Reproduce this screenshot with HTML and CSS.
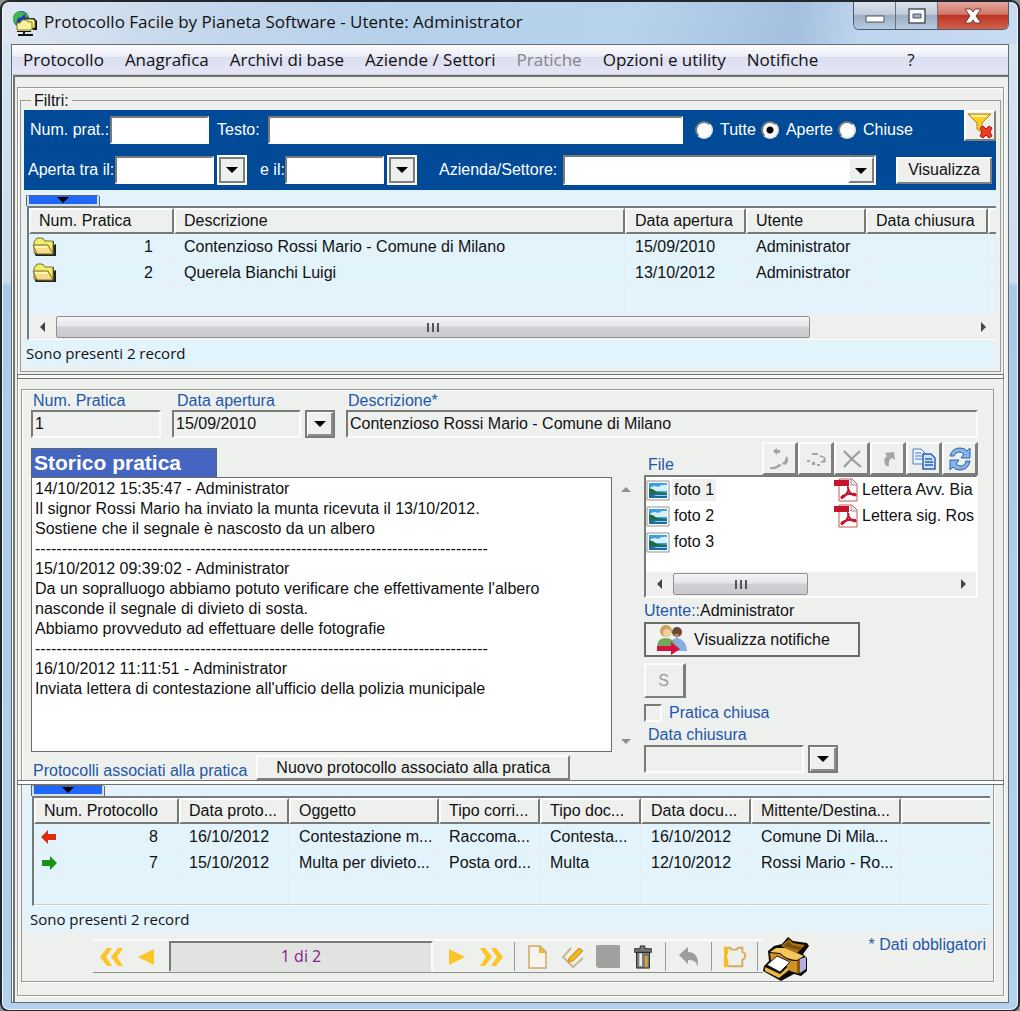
FILE: index.html
```html
<!DOCTYPE html>
<html lang="it">
<head>
<meta charset="utf-8">
<title>Protocollo Facile by Pianeta Software</title>
<link rel="stylesheet" href="styles.css">
</head>
<body>
<svg class="defs" aria-hidden="true">
  <symbol id="folder" viewBox="0 0 24 20">
    <path d="M3 18V4l3-3h5l2 3h9v4l2-1v12H4z" fill="#222"/>
    <path d="M2 16V5l3-4h5l3 3h8v13z" fill="#f3ee6a" stroke="#77702a"/>
    <path d="M1 8h15l5 9H5z" fill="#fbd98a" stroke="#77702a"/>
    <path d="M3 9h12l1 2H4z" fill="#fffbb5"/>
  </symbol>
  <symbol id="photo" viewBox="0 0 24 21">
    <path d="M1 1h22v19H1z" fill="#fff" stroke="#8d9498"/>
    <path d="M3 3h18v15H3z" fill="#3d9fe0"/>
    <path d="M3 9q4-5 9-2 4-3 9-2v6H3z" fill="#d4f0fa"/>
    <path d="M3 8q5 1 8 4l10 1v2H3z" fill="#1f6b4c"/>
    <path d="M3 14h18v4H3z" fill="#1d6c9c"/>
    <path d="M8 15h13v1H10z" fill="#8fd3e8"/>
  </symbol>
  <symbol id="pdf" viewBox="0 0 24 24">
    <path d="M5 1h13l5 5v17H5z" fill="#fff" stroke="#c55a5a"/>
    <path d="M17 1v6h6" fill="#e8e8e8" stroke="#999"/>
    <path d="M0 2h15v6H0z" fill="#c3142b"/>
    <path d="M13 9q2 0 1 4-2 5-6 7-2-1 3-3 5-2 10-1 2 2-2 1-5-3-5-8" fill="none" stroke="#c3142b" stroke-width="2"/>
  </symbol>
</svg>
<div class="window">
  <header class="titlebar">
    <svg class="app-icon" viewBox="0 0 26 26"><circle cx="9" cy="9" r="8" fill="#2436b8"/><path d="M1 8q1-5 6-7l6 2-3 4-4 1-2 6q-3-2-3-6zM12 2l5 4-3 2z" fill="#3fb84a"/><path d="M14 8h8l3 3v9h-4z" fill="#111"/><path d="M14 9h7l2 2v7h-6z" fill="#f5ee8c" stroke="#6a6220"/><path d="M5 13h3l2-3h5l1 2h4v8H5z" fill="#f8f29a" stroke="#8a8020"/><path d="M5 21h14v1h-6v2h8v2H6v-2h5v-2H5z" fill="#111"/></svg>
    <h1>Protocollo Facile by Pianeta Software - Utente: Administrator</h1>
    <div class="window-buttons">
      <button type="button" class="wb" aria-label="Riduci a icona"><svg viewBox="0 0 20 16"><path d="M1 8h18v6H1z" fill="#fff" stroke="#4b5560"/></svg></button>
      <button type="button" class="wb" aria-label="Ingrandisci"><svg viewBox="0 0 20 16"><path d="M2 1h16v14H2z" fill="#fff" stroke="#4b5560" stroke-width="1.5"/><path d="M6 6h8v4H6z" fill="#9fb0c2" stroke="#4b5560"/></svg></button>
      <button type="button" class="wb wb-close" aria-label="Chiudi"><svg viewBox="0 0 20 16"><path d="M2 1h6l2 3 2-3h6l-5 7 5 7h-6l-2-3-2 3H2l5-7z" fill="#fff" stroke="#6a3a3a"/></svg></button>
    </div>
  </header>

  <div class="client">
    <nav class="menu">
      <a href="#">Protocollo</a><a href="#">Anagrafica</a><a href="#">Archivi di base</a><a href="#">Aziende / Settori</a><a href="#" class="off">Pratiche</a><a href="#">Opzioni e utility</a><a href="#">Notifiche</a><a href="#" class="help">?</a>
    </nav>
    <div class="workspace">
      <main class="frame">
        <fieldset class="group">
          <legend>Filtri:</legend>
          <form class="filters">
            <div class="filter-row">
              <label for="num" class="l-num">Num. prat.:</label>
              <input id="num" class="sunken w-short" type="text">
              <label for="txt" class="l-txt">Testo:</label>
              <input id="txt" class="sunken grow" type="text">
              <div class="radios">
                <label><input type="radio" name="st">Tutte</label>
                <label><input type="radio" name="st" checked>Aperte</label>
                <label><input type="radio" name="st">Chiuse</label>
              </div>
              <button type="button" class="raised clear" aria-label="Rimuovi filtro"><svg viewBox="0 0 26 26"><path d="M1 1h23l-9 9v10l-5-4v-6z" fill="#f8d21c" stroke="#b8791a"/><path d="M3 2h18l-2 2H5z" fill="#fff3a0"/><path d="M13 15l3-2 3 3 3-3 3 2-2 4 2 4-3 2-3-3-3 3-3-2 2-4z" fill="#ee3b28" stroke="#a81410"/></svg></button>
            </div>
            <div class="filter-row row-dates">
              <label for="d1" class="l-from">Aperta tra il:</label>
              <input id="d1" class="sunken w-short" type="text">
              <button type="button" class="drop" aria-label="Calendario"></button>
              <label for="d2" class="l-to">e il:</label>
              <input id="d2" class="sunken w-short" type="text">
              <button type="button" class="drop" aria-label="Calendario"></button>
              <label for="az" class="l-az">Azienda/Settore:</label>
              <span class="combo grow"><select id="az" class="sunken"><option></option></select></span>
              <button type="button" class="raised show">Visualizza</button>
            </div>
          </form>
          <section class="list list-top">
            <button type="button" class="tab" aria-label="Comprimi"></button>
            <div class="grid">
              <table>
                <colgroup><col class="c145"><col><col class="c121"><col class="c120"><col class="c122"><col class="c8"></colgroup>
                <thead><tr><th>Num. Pratica</th><th>Descrizione</th><th>Data apertura</th><th>Utente</th><th>Data chiusura</th><th></th></tr></thead>
                <tbody>
                  <tr><td class="n"><div><svg class="folder"><use href="#folder"/></svg>1</div></td><td>Contenzioso Rossi Mario - Comune di Milano</td><td>15/09/2010</td><td>Administrator</td><td></td><td></td></tr>
                  <tr><td class="n"><div><svg class="folder"><use href="#folder"/></svg>2</div></td><td>Querela Bianchi Luigi</td><td>13/10/2012</td><td>Administrator</td><td></td><td></td></tr>
                  <tr class="blank"><td></td><td></td><td></td><td></td><td></td><td></td></tr>
                </tbody>
              </table>
              <div class="hscroll"><i class="arrow left"></i><span class="thumb thumb-wide"></span><i class="arrow right"></i></div>
            </div>
            <p class="status">Sono presenti 2 record</p>
          </section>
        </fieldset>

        <div class="splitter"></div>

        <section class="detail">
          <div class="fields">
            <div class="field f-num"><label for="np">Num. Pratica</label><input id="np" class="sunken flat" type="text" value="1" readonly></div>
            <div class="field f-date"><label for="da">Data apertura</label><div class="line"><input id="da" class="sunken flat" type="text" value="15/09/2010" readonly><button type="button" class="drop" aria-label="Calendario"></button></div></div>
            <div class="field grow"><label for="de">Descrizione*</label><input id="de" class="sunken flat" type="text" value="Contenzioso Rossi Mario - Comune di Milano" readonly></div>
          </div>
          <div class="columns">
            <div class="history">
              <label for="st" class="history-title">Storico pratica</label>
              <div class="history-body">
                <textarea id="st" readonly>14/10/2012 15:35:47 - Administrator
Il signor Rossi Mario ha inviato la munta ricevuta il 13/10/2012.
Sostiene che il segnale è nascosto da un albero
-------------------------------------------------------------------------------------
15/10/2012 09:39:02 - Administrator
Da un sopralluogo abbiamo potuto verificare che effettivamente l'albero
nasconde il segnale di divieto di sosta.
Abbiamo provveduto ad effettuare delle fotografie
-------------------------------------------------------------------------------------
16/10/2012 11:11:51 - Administrator
Inviata lettera di contestazione all'ufficio della polizia municipale</textarea>
                <div class="vscroll"><i class="arrow up"></i><i class="arrow down"></i></div>
              </div>
              <div class="assoc"><span class="blue">Protocolli associati alla pratica</span><button type="button" class="raised">Nuovo protocollo associato alla pratica</button></div>
            </div>
            <div class="side">
              <div class="file-head">
                <span class="blue">File</span>
                <div class="tools">
                  <button type="button" class="raised" aria-label="Inserisci"><svg viewBox="0 0 26 26"><path d="M6 5l4-3v2h3v3h-3v2zM19 10l2 2q1 6-4 7l-2-2q4-2 4-7zM3 21q5 1 9-3l3 1q-5 5-12 4z" fill="#a2a4a2"/></svg></button>
                  <button type="button" class="raised" aria-label="Scollega"><svg viewBox="0 0 26 26"><path d="M9 7h6v2H9zM4 14h3v2H4zM9 16h3v3H9zM17 9l5 2 1 5-5 1v-2h2l1-3-4-1zM14 18h3v2h-3z" fill="#a2a4a2"/></svg></button>
                  <button type="button" class="raised" aria-label="Elimina"><svg viewBox="0 0 26 26"><path d="M5 5q8 9 17 16M21 5Q13 12 5 21" fill="none" stroke="#999b99" stroke-width="2"/></svg></button>
                  <button type="button" class="raised" aria-label="Apri"><svg viewBox="0 0 26 26"><path d="M11 20q-4-7 1-10l-2-3 9-1 1 8-3-2q-4 1-3 8z" fill="#a2a4a2"/></svg></button>
                  <button type="button" class="raised" aria-label="Copia"><svg viewBox="0 0 26 26"><path d="M2 3h8l4 4v11H2z" fill="#eaf3ff" stroke="#4b7ac6"/><path d="M4 7h6M4 10h7M4 13h7" stroke="#4b7ac6"/><path d="M12 8h8l4 4v11H12z" fill="#cfe2fa" stroke="#2d5fb4" stroke-width="1.5"/><path d="M14 13h7M14 16h8M14 19h8" stroke="#2d5fb4" stroke-width="1.5"/></svg></button>
                  <button type="button" class="raised" aria-label="Aggiorna"><svg viewBox="0 0 26 26"><path d="M3 10q2-8 10-8 5 0 7 3l3-3v10h-9l3-4q-2-2-5-2-4 0-5 4z" fill="#84b4ea" stroke="#2a62b0"/><path d="M23 15q-2 9-10 9-5 0-7-3l-3 3V14h9l-3 4q2 2 5 2 4 0 5-5z" fill="#84b4ea" stroke="#2a62b0"/></svg></button>
                </div>
              </div>
              <div class="files">
                <ul>
                  <li class="sel"><svg class="ph"><use href="#photo"/></svg><span>foto 1</span></li>
                  <li><svg class="ph"><use href="#photo"/></svg><span>foto 2</span></li>
                  <li><svg class="ph"><use href="#photo"/></svg><span>foto 3</span></li>
                  <li><svg class="pd"><use href="#pdf"/></svg><span>Lettera Avv. Bia</span></li>
                  <li><svg class="pd"><use href="#pdf"/></svg><span>Lettera sig. Ros</span></li>
                </ul>
                <div class="hscroll"><i class="arrow left"></i><span class="thumb thumb-half"></span><i class="arrow right"></i></div>
              </div>
              <p class="user"><span class="blue">Utente::</span>Administrator</p>
              <button type="button" class="notify"><svg viewBox="0 0 32 30"><circle cx="21" cy="7" r="5" fill="#6b4a35"/><path d="M14 24q-1-10 7-11 9 1 10 13H14z" fill="#86aede"/><path d="M18 9h5l-2 5z" fill="#b98a68"/><circle cx="10" cy="6" r="6" fill="#c9a25c"/><circle cx="11" cy="8" r="4" fill="#f1cf9f"/><path d="M1 22q0-9 9-9t9 10H1z" fill="#71a85c"/><path d="M1 21h14v-4l9 7-9 6v-4H1z" fill="#d4143a"/></svg>Visualizza notifiche</button>
              <button type="button" class="raised s-btn" disabled>S</button>
              <label class="check blue"><input type="checkbox">Pratica chiusa</label>
              <label for="dc" class="blue closing">Data chiusura</label>
              <div class="line"><input id="dc" class="sunken flat" type="text" readonly><button type="button" class="drop" aria-label="Calendario"></button></div>
            </div>
          </div>
        </section>

        <div class="splitter splitter-low"></div>

        <section class="protocols">
          <div class="list list-bottom">
            <button type="button" class="tab" aria-label="Comprimi"></button>
            <div class="grid">
              <table>
                <colgroup><col class="c145"><col class="c110"><col class="c150"><col class="c101"><col class="c101"><col class="c110"><col class="c150"><col></colgroup>
                <thead><tr><th>Num. Protocollo</th><th>Data proto...</th><th>Oggetto</th><th>Tipo corri...</th><th>Tipo doc...</th><th>Data docu...</th><th>Mittente/Destina...</th><th></th></tr></thead>
                <tbody>
                  <tr><td class="n"><div><svg class="dir" viewBox="0 0 16 14"><path d="M0 7l7-7v4h8v6H7v4z" fill="#dc2c10"/></svg>8</div></td><td>16/10/2012</td><td>Contestazione m...</td><td>Raccoma...</td><td>Contesta...</td><td>16/10/2012</td><td>Comune Di Mila...</td><td></td></tr>
                  <tr><td class="n"><div><svg class="dir" viewBox="0 0 16 14"><path d="M16 7L9 0v4H1v6h8v4z" fill="#1a9312"/></svg>7</div></td><td>15/10/2012</td><td>Multa per divieto...</td><td>Posta ord...</td><td>Multa</td><td>12/10/2012</td><td>Rossi Mario - Ro...</td><td></td></tr>
                  <tr class="blank"><td></td><td></td><td></td><td></td><td></td><td></td><td></td><td></td></tr>
                </tbody>
              </table>
            </div>
            <p class="status">Sono presenti 2 record</p>
          </div>
          <footer class="footer">
            <div class="navigator">
              <button type="button" aria-label="Primo"><svg viewBox="0 0 24 24"><path d="M8 3h5l-6 9 6 9H8L1 12zM19 3h5l-6 9 6 9h-5l-7-9z" fill="#fcc425"/></svg></button>
              <button type="button" aria-label="Precedente"><svg viewBox="0 0 24 24"><path d="M4 12L20 4v16z" fill="#fcc425"/></svg></button>
              <output>1 di 2</output>
              <button type="button" aria-label="Successivo"><svg viewBox="0 0 24 24"><path d="M20 12L4 4v16z" fill="#fcc425"/></svg></button>
              <button type="button" aria-label="Ultimo"><svg viewBox="0 0 24 24"><path d="M16 3h-5l6 9-6 9h5l7-9zM5 3H0l6 9-6 9h5l7-9z" fill="#fcc425"/></svg></button>
              <i class="sep"></i>
              <button type="button" aria-label="Nuovo"><svg viewBox="0 0 24 24"><path d="M3 1h11l6 6v16H3z" fill="#f6f4ec" stroke="#cfa768" stroke-width="1.5"/><path d="M13 1l7 7h-7z" fill="#eeb62e"/></svg></button>
              <button type="button" aria-label="Modifica"><svg viewBox="0 0 24 24"><path d="M10 3L2 12l10 10 10-9" fill="none" stroke="#cdb68c" stroke-width="2"/><path d="M8 13L18 3l4 3-10 10-5 1z" fill="#f4b521" stroke="#c98a1c"/></svg></button>
              <button type="button" aria-label="Salva" disabled><svg viewBox="0 0 24 24"><path d="M1 0h22l1 1v22H2l-2-2V1z" fill="#9fa09f"/></svg></button>
              <button type="button" aria-label="Elimina"><svg viewBox="0 0 24 26"><path d="M9 1h5v3h7v4H3V4h6z" fill="#777" stroke="#222"/><path d="M5 8h14v17H5z" fill="#77797a" stroke="#222"/><path d="M8 9h3v14H8z" fill="#eee"/><path d="M14 12h3v12h-3z" fill="#e2a32d"/></svg></button>
              <i class="sep"></i>
              <button type="button" aria-label="Annulla" disabled><svg viewBox="0 0 24 24"><path d="M2 10l9-8v5q11 0 10 15-2-8-10-7v4z" fill="#9b9d9b"/></svg></button>
              <i class="sep"></i>
              <button type="button" aria-label="Esci"><svg viewBox="0 0 26 24"><path d="M1 1h4q2 5-1 11 3 4 1 11H1z" fill="#f6bd23"/><path d="M5 2h3l1 2h6l1-2h5v5q4 0 3 4t-3 4v7H5" fill="none" stroke="#dba95a" stroke-width="2"/></svg></button>
              <i class="sep"></i>
            </div>
            <button type="button" class="printer" aria-label="Stampa"><svg viewBox="0 0 46 46"><path d="M25 2l5 4 14 2 2 3-6 8 4 4v13l-6 5-7-2-13 7L0 36l1-5 5-5-1-10 6-5 8-2z" fill="#0f0a02"/><path d="M18 11l8-7 4 4 12 2-8 8z" fill="#a8731a"/><path d="M20 11l6-5 3 4 10 2-3 3z" fill="#7a500e"/><path d="M7 17l6-4h9l19 8-7 4q-10 0-17-7z" fill="#f3c75c"/><path d="M7 18l10 1q8 8 17 7v12l-7-2-6-8-8-5-5 3z" fill="#cf9226"/><path d="M34 26l3-2v14l-3 1z" fill="#8a5a10"/><path d="M37 24l6-2v12l-6 4z" fill="#b3ade8"/><path d="M4 30l10-9 13 6-10 10z" fill="#fff" stroke="#222"/><path d="M2 32l15 7 8-7 1 3-10 8-14-7z" fill="#eab944"/></svg></button>
            <span class="blue required">* Dati obbligatori</span>
          </footer>
        </section>
      </main>
    </div>
  </div>
</div>
</body>
</html>
```
FILE: styles.css
```css
* { box-sizing: border-box; }
body {
  margin: 0;
  background: #8c8f93;
  color: #111;
  font: 16px/20px "Liberation Sans", Arial, sans-serif;
}
button, input, select, textarea { font: inherit; color: inherit; margin: 0; border-radius: 0; }
button { padding: 0; display: flex; align-items: center; justify-content: center; background: none; border: 0; }
p { margin: 0; }
svg { display: block; flex: none; }
.defs { display: none; }
.grow { flex: 1; min-width: 0; }
.blue { color: #1f57a8; }

.window {
  min-height: 100vh;
  display: flex;
  flex-direction: column;
  padding: 0 9px 7px 9px;
  border: 2px solid #23282e;
  border-radius: 9px;
  background: linear-gradient(#d6e4f3 0, #cbdcee 280px, #abc9e9 284px, #b3d0ee 100%);
  box-shadow: inset 0 0 0 1px #eef6fd;
}
.titlebar {
  display: flex;
  height: 42px;
  margin: 0 -8px;
  padding: 0 8px 0 9px;
  border-radius: 7px 7px 0 0;
  background: linear-gradient(100deg, #dfe7f0 0, #c6d8ec 18%, #b4d0ea 40%, #b6d2ec 62%, #a4c0de 78%, #bcd4ee 84%, #c8dbf2 100%);
}
.app-icon { width: 26px; height: 26px; margin-top: 8px; }
.titlebar h1 {
  flex: 1;
  margin: 10px 0 0 6px;
  font: 17px/20px "Open Sans", "Noto Sans", sans-serif;
  white-space: nowrap;
}
.window-buttons {
  display: flex;
  align-self: flex-start;
  height: 28px;
  border: 1px solid #4f5a66;
  border-top: 0;
  border-radius: 0 0 6px 6px;
  overflow: hidden;
}
.wb {
  width: 42px;
  border-right: 1px solid #66717d;
  background: linear-gradient(#d8e1ec 0, #c3cedb 45%, #9daec2 50%, #b9cbe0 100%);
}
.wb svg { width: 20px; height: 16px; }
.wb-close { width: 70px; border: 0; background: linear-gradient(#e3a79c 0, #d4776a 45%, #bb3524 50%, #d4604d 100%); }

.client {
  flex: 1;
  display: flex;
  flex-direction: column;
  border: 1px solid #646b72;
  background: #fbfcfc;
}
.menu {
  display: flex;
  height: 30px;
  padding: 4px 11px;
  background: linear-gradient(#fdfdff 0, #eceef8 38%, #dcdff0 42%, #e4e6f5 100%);
  border-bottom: 1px solid #c4c6d4;
  font: 17px/22px "Open Sans", "Noto Sans", sans-serif;
}
.menu a { color: #111; text-decoration: none; margin-right: 21px; white-space: nowrap; }
.menu .off { color: #858585; }
.menu .help { margin-left: 68px; }
.workspace {
  flex: 1;
  display: flex;
  margin-left: 1px;
  border-top: 2px solid #72756f;
  border-left: 2px solid #72756f;
  background: #eef0ee;
  padding: 10px 4px 6px 2px;
}
.frame {
  flex: 1;
  min-width: 0;
  display: flex;
  flex-direction: column;
  border: 1px solid #979a97;
  box-shadow: inset 1px 1px #fff, 1px 1px #fff;
  padding: 3px 2px 13px 2px;
}
.group {
  margin: 0;
  min-width: 0;
  padding: 0 4px 4px 3px;
  border: 1px solid #979a97;
}
.group legend { margin-left: 7px; padding: 0 3px; height: 19px; line-height: 19px; }

.sunken {
  display: block;
  height: 28px;
  padding: 0 2px;
  border: 2px solid;
  border-color: #777a77 #fcfcfc #fcfcfc #777a77;
  background: #fff;
  outline: 0;
  min-width: 0;
}
.flat { background: #eef0ee; }
.raised {
  border: 2px solid;
  border-color: #fcfcfc #7c7f7c #7c7f7c #fcfcfc;
  background: #eef0ee;
}
.drop {
  flex: none;
  width: 30px;
  height: 28px;
  border: 2px solid;
  background: #eef0ee;
}
.drop::before, .combo::after, .tab::before {
  content: "";
  border: 6px solid transparent;
  border-top-color: #000;
  border-bottom: 0;
}

.filters { background: #004a97; color: #fff; }
.filter-row { display: flex; align-items: center; height: 40px; padding-left: 6px; white-space: nowrap; }
.row-dates { padding: 0 4px; }
.filters button { color: #111; }
.filters label { flex: none; }
.filters .drop { height: 30px; border-color: #fff; margin-left: 3px; box-shadow: inset 0 0 0 2px #7c7f7c; }
.l-num { width: 80px; }
.l-txt { width: 59px; padding-left: 8px; }
.l-from { width: 87px; }
.l-to { width: 38px; padding-left: 13px; }
.l-az { width: 146px; padding-left: 22px; }
.w-short { width: 99px; }
.combo { position: relative; }
.combo select { width: 100%; height: 30px; appearance: none; }
.combo::after { position: absolute; right: 9px; top: 13px; pointer-events: none; }
.combo::before {
  content: "";
  position: absolute;
  right: 2px;
  top: 2px;
  width: 22px;
  height: 22px;
  border: 2px solid;
  border-color: #fff #7c7f7c #7c7f7c #fff;
  background: #eef0ee;
  pointer-events: none;
}
.show { flex: none; width: 96px; height: 27px; margin-left: 20px; }
.radios { display: flex; flex: none; width: 281px; padding-left: 12px; gap: 5px; }
.radios label { display: flex; align-items: center; gap: 7px; }
.radios input {
  appearance: none;
  width: 18px;
  height: 18px;
  border: 2px solid;
  border-color: #777a77 #e6e6e6 #e6e6e6 #777a77;
  border-radius: 50%;
  background: #fff;
}
.radios input:checked { background: radial-gradient(circle, #000 0 3px, #fff 4px); }
.clear { flex: none; align-self: flex-start; width: 32px; height: 31px; }
.clear svg { width: 26px; height: 26px; }

.list { background: #e2f3fc; }
.list-top { padding: 5px 0 0 3px; }
.tab {
  width: 72px;
  height: 11px;
  border: 2px solid #d5e2ea;
  border-top: 1px solid #5d6672;
  background: #1f66fb;
  box-shadow: 1px 1px #5d6672, -1px 0 #5d6672;
}
.grid { border-left: 2px solid #777a77; border-top: 2px solid #777a77; border-bottom: 1px solid #fff; }
table { width: 100%; table-layout: fixed; border-collapse: separate; border-spacing: 0; }
.c145 { width: 145px; }
.c121 { width: 121px; }
.c120 { width: 120px; }
.c122 { width: 122px; }
.c110 { width: 110px; }
.c150 { width: 150px; }
.c101 { width: 101px; }
.c8 { width: 8px; }
th {
  height: 26px;
  padding: 0 0 0 8px;
  border: 2px solid;
  border-color: #fcfcfc #777a77 #777a77 #fcfcfc;
  background: #eef0ee;
  font-weight: normal;
  text-align: left;
  white-space: nowrap;
}
th:last-child { border-right: 0; padding: 0; }
td {
  height: 26px;
  padding: 0 0 0 10px;
  border-right: 1px solid #ebeef0;
  border-bottom: 1px solid #ebeef0;
  white-space: nowrap;
  overflow: hidden;
}
td:last-child { padding: 0; }
.n { padding: 0 20px 0 3px; }
.n div { display: flex; align-items: center; justify-content: space-between; }
.folder { width: 24px; height: 20px; }
.dir { width: 16px; height: 14px; margin-left: 4px; }
.blank td { height: 29px; border-bottom: 0; }
.status { font: 15px/22px "Open Sans", "Noto Sans", sans-serif; }
.list-top .status { padding: 2px 0 3px; margin-left: -1px; }

.hscroll { display: flex; align-items: center; height: 24px; background: #eff0ee; }
.arrow { flex: none; width: 0; height: 0; border: 5px solid transparent; }
.left { border-right-color: #444; border-left: 0; margin: 0 11px; }
.right { border-left-color: #444; border-right: 0; margin: 0 10px 0 auto; }
.up { border-bottom-color: #8d8f8d; border-top: 0; }
.down { border-top-color: #8d8f8d; border-bottom: 0; }
.thumb {
  display: flex;
  align-items: center;
  justify-content: center;
  height: 22px;
  border: 1px solid #8e9093;
  border-radius: 2px;
  background: linear-gradient(#f4f4f6 0, #e6e6ea 45%, #cfcfd5 50%, #c9c9cf 100%);
}
.thumb::before {
  content: "";
  width: 12px;
  height: 9px;
  background: repeating-linear-gradient(90deg, #555 0 2px, transparent 2px 5px);
}
.thumb-wide { width: 78%; }
.thumb-half { width: 135px; }

.splitter {
  flex: none;
  height: 5px;
  margin: 2px -3px 0 -3px;
  border: 1px solid #6f726f;
  background: #fbfcfb;
}
.splitter-low { margin-top: 0; }

.detail {
  margin: 10px 7px 0 1px;
  border: 1px solid #979a97;
  border-bottom: 0;
  box-shadow: inset 1px 1px #fff;
  padding: 0 15px 0 9px;
}
.fields { display: flex; gap: 11px; }
.field label { display: block; height: 20px; padding: 1px 0 0 2px; line-height: 20px; color: #1f57a8; }
.field input { width: 100%; }
.f-num { width: 130px; }
.f-date { width: 163px; }
.f-date label { padding-left: 5px; }
.line { display: flex; gap: 4px; }
.field .line input { flex: 1; }
.detail .drop { border-color: #777a77; box-shadow: inset 1px 1px #fff, inset -2px -2px #8a8d8a; }
.columns { display: grid; grid-template-columns: minmax(0, 1fr) 334px; gap: 8px; margin-top: 5px; }
.history { display: flex; flex-direction: column; align-items: stretch; padding-top: 5px; }
.history-title {
  align-self: flex-start;
  width: 186px;
  height: 29px;
  padding-left: 2px;
  border: 1px solid #566;
  border-bottom: 0;
  background: #4466c2;
  color: #fff;
  font-size: 21px;
  line-height: 27px;
  font-weight: bold;
}
.history-body { display: flex; height: 275px; }
.history textarea {
  flex: 1;
  min-width: 0;
  padding: 1px 3px;
  border: 1px solid #6b6e6b;
  background: #fff;
  resize: none;
  outline: 0;
  overflow: hidden;
}
.vscroll { display: flex; flex-direction: column; align-items: center; justify-content: space-between; width: 24px; padding: 10px 0 8px 4px; }
.assoc { display: flex; align-items: flex-end; gap: 9px; padding-top: 3px; white-space: nowrap; }
.assoc .blue { padding-left: 2px; line-height: 18px; }
.assoc .raised { width: 314px; height: 25px; }

.side { min-width: 0; }
.file-head { display: flex; align-items: flex-end; justify-content: space-between; height: 32px; padding-left: 4px; }
.tools { display: flex; }
.tools .raised { width: 36px; height: 33px; border-right-width: 3px; }
.tools svg { width: 26px; height: 26px; }
.files { border: 2px solid; border-color: #777a77 #fff #fff #777a77; background: #fff; }
.files ul {
  display: grid;
  grid-template-rows: repeat(3, 26px);
  grid-auto-flow: column;
  grid-auto-columns: 188px;
  height: 95px;
  margin: 0;
  padding: 0;
  list-style: none;
  overflow: hidden;
}
.files li { display: flex; align-items: center; gap: 2px; white-space: nowrap; }
.files li span { padding: 1px 2px; }
.files .sel span { background: #eff1ef; }
.ph { width: 24px; height: 21px; }
.pd { width: 24px; height: 24px; }
.user { line-height: 20px; padding: 3px 0 1px; }
.notify { width: 216px; height: 35px; border: 2px solid #6a6d6a; padding-right: 18px; gap: 6px; background: #f1f2f1; }
.notify svg { width: 32px; height: 30px; }
.s-btn { width: 42px; height: 35px; margin-top: 6px; padding-right: 2px; color: #999; border-right-width: 3px; }
.check { display: flex; align-items: center; gap: 7px; height: 20px; margin-top: 5px; }
.check input { appearance: none; width: 18px; height: 18px; border: 2px solid; border-color: #777a77 #fcfcfc #fcfcfc #777a77; }
.closing { display: block; padding: 2px 0 0 4px; }
.side .line .sunken { width: 160px; }

.protocols {
  flex: 1;
  margin: 0 7px 0 1px;
  border: 1px solid #979a97;
  border-top: 0;
  box-shadow: 1px 1px #fff;
}
.list-bottom { padding: 0 3px 0 9px; margin-left: 1px; }
.list-bottom .blank td { border-bottom: 1px solid #c5ced3; }
.list-bottom .status { padding: 2px 0 1px; margin-left: -2px; }
.footer { display: flex; align-items: flex-start; padding: 4px 7px 0 71px; }
.navigator {
  display: flex;
  align-items: center;
  height: 34px;
  margin-top: 4px;
  border-top: 2px solid #fafbfa;
  border-bottom: 1px solid #8d908d;
}
.navigator button { width: 35px; height: 30px; }
.navigator button svg { width: 24px; height: 24px; }
.navigator output {
  width: 264px;
  height: 31px;
  margin: 0 6px;
  border: 2px solid;
  border-color: #777a77 #fff #e1e3e1 #777a77;
  background: #e1e3e1;
  color: #861a8c;
  font: 16px/27px "Open Sans", "Noto Sans", sans-serif;
  text-align: center;
}
.sep { width: 1px; height: 29px; margin: 0 5px; background: #979a97; }
.printer svg { width: 46px; height: 46px; }
.required { margin-left: auto; white-space: nowrap; }
```
